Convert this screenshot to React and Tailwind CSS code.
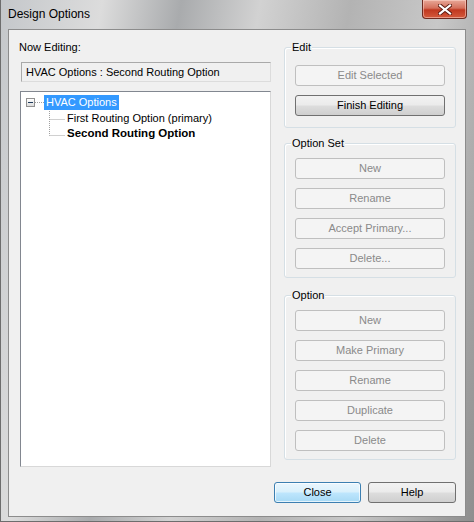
const font = { fontFamily: '"Liberation Sans", Arial, sans-serif' };

function Btn({ children, disabled, primary, className = "" }) {
  let look =
    "border-[#707070] text-black bg-[linear-gradient(to_bottom,#f2f2f2_0%,#ebebeb_48%,#dddddd_52%,#cfcfcf_100%)]";
  if (disabled) look = "border-[#bfbfbf] text-[#8a8a8a] bg-[#f4f4f4]";
  if (primary)
    look =
      "border-[#3c7fb1] text-black bg-[linear-gradient(to_bottom,#eaf6fd_0%,#d9f0fc_48%,#bee6fd_52%,#a7d9f5_100%)] shadow-[inset_0_0_0_1px_rgba(255,255,255,0.7)]";
  return (
    <div
      className={`h-[21px] flex items-center justify-center rounded-[3px] border text-[11px] ${look} ${className}`}
    >
      {children}
    </div>
  );
}

function Group({ label, className = "", children }) {
  return (
    <div
      className={`relative rounded-[3px] border border-[#d5dfe5] shadow-[inset_1px_1px_0_#ffffff] ${className}`}
    >
      <span className="absolute -top-[8px] left-[6px] bg-[#f0f0f0] px-[1px] text-[11px] leading-[14px] text-black">
        {label}
      </span>
      {children}
    </div>
  );
}

function CloseGlyph() {
  return (
    <svg width="14" height="11" viewBox="0 0 14 11">
      <path d="M2 1.5 L12 9.5 M12 1.5 L2 9.5" stroke="#5a1a10" strokeWidth="4" strokeLinecap="square" />
      <path d="M2 1.5 L12 9.5 M12 1.5 L2 9.5" stroke="#ffffff" strokeWidth="2.2" strokeLinecap="square" />
    </svg>
  );
}

export default function App() {
  return (
    <div
      style={font}
      className="w-[474px] h-[522px] flex flex-col border-l border-b border-[#6d6d6d] bg-[linear-gradient(100deg,#c4c7ca_0%,#dcdcdc_18%,#a9abad_32%,#d2d2d2_46%,#b3b3b3_62%,#c8c8c8_78%,#8e8e8e_100%)]"
    >
      {/* title bar */}
      <div className="h-[29px] flex items-start">
        <span className="ml-[7px] mt-[7px] text-[12px] leading-[15px] text-black">Design Options</span>
        <div className="ml-auto mr-[7px] w-[45px] h-[19px] flex items-center justify-center rounded-b-[4px] border border-t-0 border-[#6e2b20] bg-[linear-gradient(to_bottom,#e8a898_0%,#d4705c_45%,#c0381f_55%,#d45a3c_100%)] shadow-[inset_0_0_0_1px_rgba(255,220,210,0.5)]">
          <CloseGlyph />
        </div>
      </div>

      {/* client area */}
      <div className="ml-[7px] mr-[8px] mb-[4px] flex-1 flex flex-col border border-[#8c8c8c] bg-[#f0f0f0] text-[11px] text-black">
        <div className="flex flex-1">
          {/* left column */}
          <div className="ml-[11px] w-[251px] flex flex-col">
            <div className="mt-[10px] ml-[-1px] leading-[14px]">Now Editing:</div>
            <div className="mt-[8px] ml-[1px] h-[20px] flex items-center pl-[4px] border border-[#a9a9a9] border-b-[#dcdcdc] border-r-[#dcdcdc] bg-[#f0f0f0]">
              HVAC Options : Second Routing Option
            </div>
            {/* tree */}
            <div className="mt-[9px] h-[376px] relative border border-[#828790] border-b-[#d8d8d8] border-r-[#d8d8d8] bg-white pt-[2px]">
              <svg className="absolute left-0 top-0" width="60" height="60">
                <path d="M28.5 19 V43.5 M28.5 27.5 H44 M28.5 43.5 H44" stroke="#a0a0a0" strokeDasharray="1 1" fill="none" />
              </svg>
              <div className="h-[16px] flex items-center pl-[5px]">
                <div className="w-[9px] h-[9px] flex items-center justify-center border border-[#919191] bg-[linear-gradient(to_bottom,#ffffff,#dcdcdc)]">
                  <div className="w-[5px] h-px bg-[#1e395b]" />
                </div>
                <div className="w-[9px] border-t border-dotted border-[#a0a0a0]" />
                <span className="h-[15px] flex items-center px-[2px] bg-[#3399ff] text-white">HVAC Options</span>
              </div>
              <div className="h-[16px] flex items-center pl-[46px]">First Routing Option (primary)</div>
              <div className="h-[16px] flex items-center pl-[46px] font-bold text-[11.5px]">Second Routing Option</div>
            </div>
          </div>

          {/* right column */}
          <div className="ml-[13px] w-[172px] flex flex-col">
            <Group label="Edit" className="mt-[17px] h-[81px] px-[10px] pt-[17px]">
              <Btn disabled>Edit Selected</Btn>
              <Btn className="mt-[9px]">Finish Editing</Btn>
            </Group>
            <Group label="Option Set" className="mt-[15px] h-[135px] px-[10px] pt-[14px] flex flex-col gap-[9px]">
              <Btn disabled>New</Btn>
              <Btn disabled>Rename</Btn>
              <Btn disabled>Accept Primary...</Btn>
              <Btn disabled>Delete...</Btn>
            </Group>
            <Group label="Option" className="mt-[17px] h-[165px] px-[10px] pt-[14px] flex flex-col gap-[9px]">
              <Btn disabled>New</Btn>
              <Btn disabled>Make Primary</Btn>
              <Btn disabled>Rename</Btn>
              <Btn disabled>Duplicate</Btn>
              <Btn disabled>Delete</Btn>
            </Group>
          </div>
        </div>

        {/* footer buttons */}
        <div className="flex items-start h-[34px] pl-[265px]">
          <Btn primary className="w-[87px]">Close</Btn>
          <Btn className="ml-[7px] w-[88px]">Help</Btn>
        </div>
      </div>
    </div>
  );
}
